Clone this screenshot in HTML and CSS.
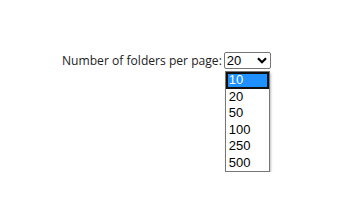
FILE: index.html
```html
<!DOCTYPE html>
<html>
<head>
<meta charset="utf-8">
<link rel="stylesheet" href="styles.css">
</head>
<body>
<div class="page">
  <div class="row">
    <span class="label">Number of folders per page:</span>
    <div class="select-wrap">
      <div class="select">
        <span class="value">20</span>
        <svg class="chev" width="10" height="7" viewBox="0 0 10 7"><path d="M1 1.2 L5 5.2 L9 1.2" fill="none" stroke="#000" stroke-width="2.2"/></svg>
      </div>
      <div class="list">
        <div class="opt active">10</div>
        <div class="opt">20</div>
        <div class="opt">50</div>
        <div class="opt">100</div>
        <div class="opt">250</div>
        <div class="opt">500</div>
      </div>
    </div>
  </div>
</div>
</body>
</html>
```
FILE: styles.css
```css
html, body { margin: 0; padding: 0; background: #fff; }
.page { padding: 52px 0 0 62px; }
.row { display: flex; align-items: flex-start; gap: 2px; }
.label {
  font-family: "Open Sans", "Noto Sans", sans-serif;
  font-size: 12.1px;
  color: #222;
  line-height: 17px;
}
.select-wrap { display: flex; flex-direction: column; }
.select {
  box-sizing: border-box;
  width: 47px;
  height: 17px;
  border: 1px solid #767676;
  border-radius: 2px;
  display: flex;
  align-items: center;
  justify-content: space-between;
  padding: 0 3px 0 2px;
  font-family: "Liberation Sans", Arial, sans-serif;
  font-size: 13px;
  color: #000;
}
.chev { display: block; }
.list {
  margin: 2px 0 0 1px;
  padding: 0;
  box-sizing: border-box;
  width: 45px;
  border: 1px solid #767676;
  background: #fff;
  box-shadow: 1px 2px 2px rgba(0,0,0,0.25);
  font-family: "Liberation Sans", Arial, sans-serif;
  font-size: 13px;
  color: #000;
}
.opt {
  height: 16.5px;
  line-height: 16.5px;
  padding-left: 3px;
}
.opt.active {
  background: #1e90ff;
  color: #fff;
  outline: 2px solid #111;
  outline-offset: -2px;
}
```
